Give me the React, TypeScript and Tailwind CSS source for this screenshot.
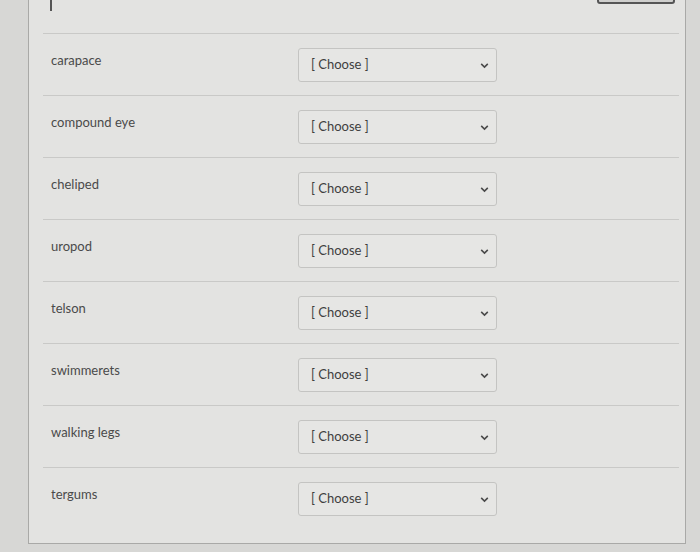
import React from 'react'

const parts = [
  'carapace',
  'compound eye',
  'cheliped',
  'uropod',
  'telson',
  'swimmerets',
  'walking legs',
  'tergums',
]

function Chevron() {
  return (
    <svg width="11" height="11" viewBox="0 0 10 10" fill="none">
      <path d="M2 3.5 L5 6.5 L8 3.5" stroke="#4a4a4a" strokeWidth="1.4" />
    </svg>
  )
}

function Row({ label, last }: { label: string; last: boolean }) {
  return (
    <div
      className={`flex items-start border-t border-[#c9c9c7] ${last ? 'h-[76px]' : 'h-[62px]'}`}
    >
      <div className="w-[255px] pt-[18px] pl-[8px] text-[13px] leading-4 text-[#4a4a4a]">
        {label}
      </div>
      <div className="mt-[14px] flex h-[34px] w-[199px] items-center justify-between rounded-[3px] border border-[#c4c4c2] bg-[#e6e6e4] pl-[12px] pr-[6px]">
        <span className="text-[13px] text-[#3f3f3f]">[ Choose ]</span>
        <Chevron />
      </div>
    </div>
  )
}

export default function App() {
  return (
    <div
      className="h-[552px] w-[700px] overflow-hidden bg-[#d7d7d5] pl-[28px]"
      style={{ fontFamily: 'Lato, "Open Sans", sans-serif' }}
    >
      <div className="w-[658px] border-b border-l border-r border-[#a9a9a7] bg-[#e3e3e1]">
        <div className="flex h-[33px] items-start justify-between pl-[21px] pr-[10px]">
          <div className="h-[11px] w-[2px] bg-[#555]" />
          <div className="-mt-[20px] h-[24px] w-[78px] rounded-[3px] border-2 border-[#555] bg-[#cfcfcd]" />
        </div>
        <div className="pl-[14px] pr-[6px]">
          {parts.map((p, i) => (
            <Row key={p} label={p} last={i === parts.length - 1} />
          ))}
        </div>
      </div>
    </div>
  )
}
